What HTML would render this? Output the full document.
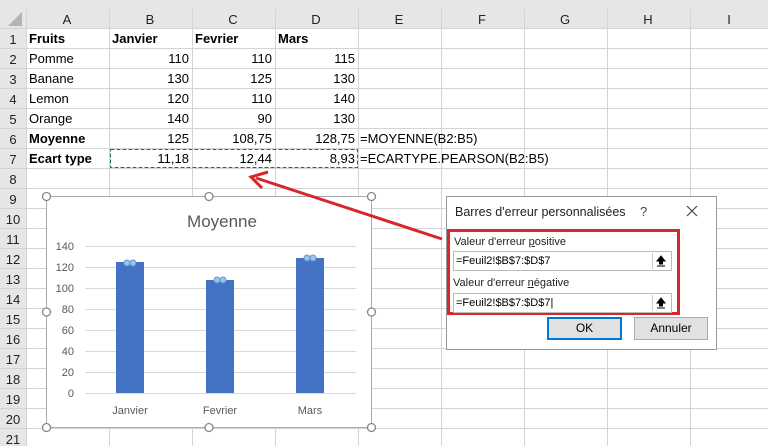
<!DOCTYPE html>
<html><head><meta charset="utf-8"><style>
body{margin:0;width:768px;height:446px;overflow:hidden;background:#fff;font-family:"Liberation Sans",sans-serif;position:relative}
.a{position:absolute}
.t{position:absolute;font-size:13px;color:#000;line-height:20px;white-space:nowrap}
.r{text-align:right}
.b{font-weight:bold}
</style></head><body>
<svg class="a" style="left:0;top:0" width="768" height="446">
<rect x="0" y="0" width="768" height="29" fill="#e6e6e6"/>
<rect x="0" y="0" width="26" height="446" fill="#e6e6e6"/>
<polygon points="22,12 22,26 8,26" fill="#b4b4b4"/>
<g stroke="#d4d4d4" stroke-width="1">
<line x1="26.5" y1="9" x2="26.5" y2="446"/>
<line x1="109.5" y1="9" x2="109.5" y2="446"/><line x1="192.5" y1="9" x2="192.5" y2="446"/>
<line x1="275.5" y1="9" x2="275.5" y2="446"/><line x1="358.5" y1="9" x2="358.5" y2="446"/>
<line x1="441.5" y1="9" x2="441.5" y2="446"/><line x1="524.5" y1="9" x2="524.5" y2="446"/>
<line x1="607.5" y1="9" x2="607.5" y2="446"/><line x1="690.5" y1="9" x2="690.5" y2="446"/>
<line x1="0" y1="28.5" x2="768" y2="28.5"/><line x1="0" y1="48.5" x2="768" y2="48.5"/><line x1="0" y1="68.5" x2="768" y2="68.5"/><line x1="0" y1="88.5" x2="768" y2="88.5"/><line x1="0" y1="108.5" x2="768" y2="108.5"/><line x1="0" y1="128.5" x2="768" y2="128.5"/><line x1="0" y1="148.5" x2="768" y2="148.5"/><line x1="0" y1="168.5" x2="768" y2="168.5"/><line x1="0" y1="188.5" x2="768" y2="188.5"/><line x1="0" y1="208.5" x2="768" y2="208.5"/><line x1="0" y1="228.5" x2="768" y2="228.5"/><line x1="0" y1="248.5" x2="768" y2="248.5"/><line x1="0" y1="268.5" x2="768" y2="268.5"/><line x1="0" y1="288.5" x2="768" y2="288.5"/><line x1="0" y1="308.5" x2="768" y2="308.5"/><line x1="0" y1="328.5" x2="768" y2="328.5"/><line x1="0" y1="348.5" x2="768" y2="348.5"/><line x1="0" y1="368.5" x2="768" y2="368.5"/><line x1="0" y1="388.5" x2="768" y2="388.5"/><line x1="0" y1="408.5" x2="768" y2="408.5"/><line x1="0" y1="428.5" x2="768" y2="428.5"/>
</g>
<rect x="110.5" y="149.5" width="247" height="18" fill="none" stroke="#217346" stroke-dasharray="4,2"/>
<g font-family="Liberation Sans" font-size="13" fill="#222" text-anchor="middle">
<text x="67" y="24">A</text><text x="150" y="24">B</text><text x="233" y="24">C</text><text x="316" y="24">D</text><text x="399" y="24">E</text><text x="482" y="24">F</text><text x="565" y="24">G</text><text x="648" y="24">H</text><text x="729" y="24">I</text>
<text x="13" y="44">1</text><text x="13" y="64">2</text><text x="13" y="84">3</text><text x="13" y="104">4</text><text x="13" y="124">5</text><text x="13" y="144">6</text><text x="13" y="164">7</text><text x="13" y="184">8</text><text x="13" y="204">9</text><text x="13" y="224">10</text><text x="13" y="244">11</text><text x="13" y="264">12</text><text x="13" y="284">13</text><text x="13" y="304">14</text><text x="13" y="324">15</text><text x="13" y="344">16</text><text x="13" y="364">17</text><text x="13" y="384">18</text><text x="13" y="404">19</text><text x="13" y="424">20</text><text x="13" y="444">21</text>
</g>
</svg>
<div class="t b" style="left:29px;top:29px">Fruits</div><div class="t b" style="left:112px;top:29px">Janvier</div><div class="t b" style="left:195px;top:29px">Fevrier</div><div class="t b" style="left:278px;top:29px">Mars</div>
<div class="t" style="left:29px;top:49px">Pomme</div><div class="t" style="left:29px;top:69px">Banane</div><div class="t" style="left:29px;top:89px">Lemon</div><div class="t" style="left:29px;top:109px">Orange</div>
<div class="t b" style="left:29px;top:129px">Moyenne</div><div class="t b" style="left:29px;top:149px">Ecart type</div>
<div class="t r" style="left:110px;width:79px;top:49px">110</div><div class="t r" style="left:193px;width:79px;top:49px">110</div><div class="t r" style="left:276px;width:79px;top:49px">115</div>
<div class="t r" style="left:110px;width:79px;top:69px">130</div><div class="t r" style="left:193px;width:79px;top:69px">125</div><div class="t r" style="left:276px;width:79px;top:69px">130</div>
<div class="t r" style="left:110px;width:79px;top:89px">120</div><div class="t r" style="left:193px;width:79px;top:89px">110</div><div class="t r" style="left:276px;width:79px;top:89px">140</div>
<div class="t r" style="left:110px;width:79px;top:109px">140</div><div class="t r" style="left:193px;width:79px;top:109px">90</div><div class="t r" style="left:276px;width:79px;top:109px">130</div>
<div class="t r" style="left:110px;width:79px;top:129px">125</div><div class="t r" style="left:193px;width:79px;top:129px">108,75</div><div class="t r" style="left:276px;width:79px;top:129px">128,75</div>
<div class="t r" style="left:110px;width:79px;top:149px">11,18</div><div class="t r" style="left:193px;width:79px;top:149px">12,44</div><div class="t r" style="left:276px;width:79px;top:149px">8,93</div>
<div class="t" style="left:360px;top:129px">=MOYENNE(B2:B5)</div><div class="t" style="left:360px;top:149px">=ECARTYPE.PEARSON(B2:B5)</div>

<svg class="a" style="left:0;top:0" width="768" height="446">
<rect x="46.5" y="196.5" width="325" height="231" fill="#fff" stroke="#aaa"/>
<text x="222" y="227" font-family="Liberation Sans" font-size="17" fill="#595959" text-anchor="middle">Moyenne</text>
<g stroke="#d9d9d9"><line x1="85" y1="246.5" x2="356" y2="246.5"/><line x1="85" y1="267.5" x2="356" y2="267.5"/><line x1="85" y1="288.5" x2="356" y2="288.5"/><line x1="85" y1="309.5" x2="356" y2="309.5"/><line x1="85" y1="330.5" x2="356" y2="330.5"/><line x1="85" y1="351.5" x2="356" y2="351.5"/><line x1="85" y1="372.5" x2="356" y2="372.5"/><line x1="85" y1="393.5" x2="356" y2="393.5"/></g>
<g font-family="Liberation Sans" font-size="11" fill="#595959" text-anchor="end"><text x="74" y="250">140</text><text x="74" y="271">120</text><text x="74" y="292">100</text><text x="74" y="313">80</text><text x="74" y="334">60</text><text x="74" y="355">40</text><text x="74" y="376">20</text><text x="74" y="397">0</text></g>
<g font-family="Liberation Sans" font-size="11" fill="#595959" text-anchor="middle"><text x="130" y="414">Janvier</text><text x="220" y="414">Fevrier</text><text x="310" y="414">Mars</text></g>
<rect x="116" y="262" width="28" height="131" fill="#4472c4"/><rect x="206" y="280" width="28" height="113" fill="#4472c4"/><rect x="296" y="258" width="28" height="135" fill="#4472c4"/>
<g fill="#9dc3e6" stroke="#5b9bd5" stroke-width="1"><circle cx="127" cy="263" r="3"/><circle cx="133" cy="263" r="3"/><circle cx="217" cy="280" r="3"/><circle cx="223" cy="280" r="3"/><circle cx="307" cy="258" r="3"/><circle cx="313" cy="258" r="3"/></g>
<g fill="#fff" stroke="#888" stroke-width="1.3"><circle cx="46.5" cy="196.5" r="4"/><circle cx="209" cy="196.5" r="4"/><circle cx="371.5" cy="196.5" r="4"/><circle cx="46.5" cy="312" r="4"/><circle cx="371.5" cy="312" r="4"/><circle cx="46.5" cy="427.5" r="4"/><circle cx="209" cy="427.5" r="4"/><circle cx="371.5" cy="427.5" r="4"/></g>
<line x1="442" y1="239" x2="256" y2="178" stroke="#d9262e" stroke-width="3"/>
<polyline points="268,172 251,177 262,188" fill="none" stroke="#d9262e" stroke-width="3"/>
</svg>

<div class="a" style="left:446px;top:196px;width:271px;height:154px;background:#fff;border:1px solid #999;box-sizing:border-box"></div>
<div class="t" style="left:455px;top:202px;color:#222;font-size:12.5px">Barres d'erreur personnalisées</div>
<div class="t" style="left:640px;top:202px;color:#444">?</div>
<svg class="a" style="left:686px;top:205px" width="12" height="12"><path d="M1 1L11 11M11 1L1 11" stroke="#444" stroke-width="1.2"/></svg>
<div class="a" style="left:447px;top:229px;width:233px;height:86px;border:3px solid #d9262e;box-sizing:border-box"></div>
<div class="t" style="left:454px;top:232px;font-size:11px;color:#222">Valeur d'erreur <u>p</u>ositive</div>
<div class="a" style="left:453px;top:251px;width:219px;height:20px;border:1px solid #bbb;box-sizing:border-box"></div>
<div class="t" style="left:456px;top:251px;font-size:11px">=Feuil2!$B$7:$D$7</div>
<div class="t" style="left:453px;top:273px;font-size:11px;color:#222">Valeur d'erreur <u>n</u>égative</div>
<div class="a" style="left:453px;top:293px;width:219px;height:20px;border:1px solid #bbb;box-sizing:border-box"></div>
<div class="t" style="left:456px;top:293px;font-size:11px">=Feuil2!$B$7:$D$7|</div>
<div class="a" style="left:652px;top:253px;width:18px;height:16px;border-left:1px solid #ccc"></div>
<div class="a" style="left:652px;top:295px;width:18px;height:16px;border-left:1px solid #ccc"></div>
<svg class="a" style="left:655px;top:255px" width="12" height="12"><path d="M6 1L10 6H7.5V9H4.5V6H2Z M2 11H10" fill="#000" stroke="#000" stroke-width="1"/></svg>
<svg class="a" style="left:655px;top:297px" width="12" height="12"><path d="M6 1L10 6H7.5V9H4.5V6H2Z M2 11H10" fill="#000" stroke="#000" stroke-width="1"/></svg>
<div class="a" style="left:547px;top:317px;width:75px;height:23px;background:#e1e1e1;border:2px solid #0078d7;box-sizing:border-box;text-align:center;font-size:12px;line-height:19px">OK</div>
<div class="a" style="left:634px;top:317px;width:74px;height:23px;background:#e1e1e1;border:1px solid #adadad;box-sizing:border-box;text-align:center;font-size:12px;line-height:21px">Annuler</div>
</body></html>
